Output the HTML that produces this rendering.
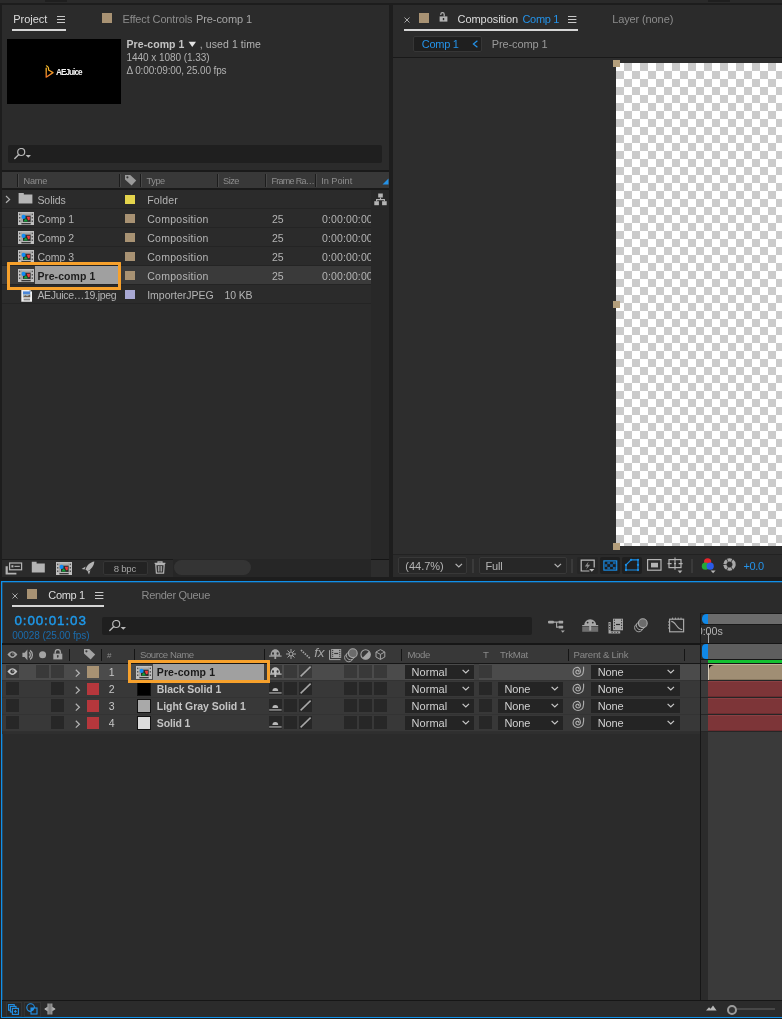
<!DOCTYPE html>
<html><head><meta charset="utf-8"><title>After Effects</title>
<style>
html,body{margin:0;padding:0;}
body{width:782px;height:1019px;overflow:hidden;background:#1d1d1d;font-family:"Liberation Sans", sans-serif;position:relative;}
#app{position:absolute;left:0;top:0;width:782px;height:1019px;overflow:hidden;will-change:transform;}
#app div,#app span,#app svg{position:absolute;display:block;}
.t{white-space:nowrap;}
</style></head><body><div id="app">
<div style="left:0px;top:0px;width:782px;height:3px;background:#2a2a2a;"></div>
<div style="left:45px;top:0px;width:22px;height:2px;background:#1f1f1f;"></div>
<div style="left:708px;top:0px;width:22px;height:2px;background:#1f1f1f;"></div>
<div style="left:2px;top:5px;width:387px;height:572px;background:#2b2b2b;"></div>
<div style="left:393px;top:5px;width:389px;height:572px;background:#2b2b2b;"></div>
<span class="t" style="left:13.3px;top:14px;font-size:11px;line-height:11px;color:#dcdcdc;letter-spacing:-0.036px;">Project</span>
<svg style="left:57px;top:15px;" width="9" height="9" viewBox="0 0 9 9"><path d="M0 1.5h8M0 4.5h8M0 7.5h8" stroke="#c8c8c8" stroke-width="1" fill="none"/></svg>
<div style="left:12px;top:29px;width:54px;height:2px;background:#d6d6d6;"></div>
<div style="left:102px;top:13px;width:10px;height:10px;background:#a89273;"></div>
<span class="t" style="left:122.5px;top:14px;font-size:11px;line-height:11px;color:#8c8c8c;letter-spacing:-0.130px;">Effect Controls</span>
<span class="t" style="left:196px;top:14px;font-size:11px;line-height:11px;color:#a6a6a6;letter-spacing:-0.086px;">Pre-comp 1</span>
<div style="left:7px;top:39px;width:114px;height:65px;background:#000;"></div>
<svg style="left:44px;top:64.7px;" width="11" height="14" viewBox="0 0 11 14"><defs><linearGradient id="lg" x1="0" y1="0" x2="0" y2="1"><stop offset="0" stop-color="#f7b92b"/><stop offset="1" stop-color="#f0772a"/></linearGradient></defs><path d="M2.2 3.2V12.2L9 7.6L4.6 5" stroke="url(#lg)" stroke-width="1.3" fill="none" stroke-linejoin="round" stroke-linecap="round"/><path d="M2.4 0.8C4 1.4 4.8 2.6 4.6 4.6" stroke="#f7b92b" stroke-width="1.1" fill="none" stroke-linecap="round"/></svg>
<span class="t" style="left:56px;top:69px;font-size:8.2px;line-height:8.2px;color:#f4f4f4;font-weight:700;letter-spacing:-0.959px;">AEJuice</span>
<span class="t" style="left:126.5px;top:39px;font-size:10.5px;line-height:10.5px;color:#c4c4c4;font-weight:700;letter-spacing:0.081px;">Pre-comp 1</span>
<svg style="left:188px;top:41px;" width="9" height="7" viewBox="0 0 9 7"><path d="M0.6 0.8h7.4L4.3 6z" fill="#e4e4e4"/></svg>
<span class="t" style="left:199.8px;top:39px;font-size:10.5px;line-height:10.5px;color:#b2b2b2;letter-spacing:0.083px;">, used 1 time</span>
<span class="t" style="left:126.5px;top:53px;font-size:10px;line-height:10px;color:#b2b2b2;letter-spacing:-0.053px;">1440 x 1080 (1.33)</span>
<span class="t" style="left:126.5px;top:66px;font-size:10px;line-height:10px;color:#b2b2b2;letter-spacing:-0.125px;">Δ 0:00:09:00, 25.00 fps</span>
<div style="left:8px;top:145px;width:374px;height:18px;background:#1f1f1f;border-radius:2px;"></div>
<svg style="left:14px;top:148px;" width="18" height="12" viewBox="0 0 18 12"><circle cx="7.2" cy="4" r="3.5" stroke="#b8b8b8" stroke-width="1.2" fill="none"/><path d="M4.8 6.6L0.8 10.6" stroke="#b8b8b8" stroke-width="1.4" stroke-linecap="round"/><path d="M11.6 7h5.4l-2.7 2.8z" fill="#b8b8b8"/></svg>
<div style="left:2px;top:170px;width:387px;height:2px;background:#1a1a1a;"></div>
<div style="left:2px;top:172px;width:387px;height:16px;background:#383838;"></div>
<div style="left:2px;top:188px;width:387px;height:2px;background:#1a1a1a;"></div>
<div style="left:17px;top:174px;width:1px;height:13px;background:#1c1c1c;"></div>
<div style="left:18px;top:174px;width:1px;height:13px;background:#484848;"></div>
<div style="left:119px;top:174px;width:1px;height:13px;background:#1c1c1c;"></div>
<div style="left:120px;top:174px;width:1px;height:13px;background:#484848;"></div>
<div style="left:140px;top:174px;width:1px;height:13px;background:#1c1c1c;"></div>
<div style="left:141px;top:174px;width:1px;height:13px;background:#484848;"></div>
<div style="left:217px;top:174px;width:1px;height:13px;background:#1c1c1c;"></div>
<div style="left:218px;top:174px;width:1px;height:13px;background:#484848;"></div>
<div style="left:265px;top:174px;width:1px;height:13px;background:#1c1c1c;"></div>
<div style="left:266px;top:174px;width:1px;height:13px;background:#484848;"></div>
<div style="left:315px;top:174px;width:1px;height:13px;background:#1c1c1c;"></div>
<div style="left:316px;top:174px;width:1px;height:13px;background:#484848;"></div>
<span class="t" style="left:23.6px;top:177px;font-size:9.2px;line-height:9.2px;color:#8e8e8e;letter-spacing:-0.279px;">Name</span>
<span class="t" style="left:146.5px;top:177px;font-size:9.2px;line-height:9.2px;color:#8e8e8e;letter-spacing:-0.405px;">Type</span>
<span class="t" style="left:223.1px;top:177px;font-size:9.2px;line-height:9.2px;color:#8e8e8e;letter-spacing:-0.519px;">Size</span>
<span class="t" style="left:271.5px;top:177px;font-size:9px;line-height:9px;color:#8e8e8e;letter-spacing:-0.724px;">Frame Ra…</span>
<span class="t" style="left:321.2px;top:177px;font-size:9.2px;line-height:9.2px;color:#8e8e8e;letter-spacing:-0.020px;">In Point</span>
<svg style="left:124px;top:173.6px;" width="14" height="13" viewBox="0 0 14 13"><path d="M1 1h5.2l6 5.6-4.6 4.8-6.6-6z" fill="#9a9a9a"/><circle cx="3.4" cy="3.3" r="1.1" fill="#383838"/></svg>
<svg style="left:382px;top:178px;" width="7" height="7" viewBox="0 0 7 7"><path d="M6.5 0.5v6h-6z" fill="#2492e8"/></svg>
<div style="left:2px;top:190px;width:369px;height:368px;background:#2b2b2b;"></div>
<div style="left:371px;top:190px;width:18px;height:369px;background:#282828;"></div>
<div style="left:2px;top:266px;width:369px;height:19px;background:#3a3a3a;"></div>
<div style="left:2px;top:208px;width:369px;height:1px;background:#242424;"></div>
<div style="left:2px;top:227px;width:369px;height:1px;background:#242424;"></div>
<div style="left:2px;top:246px;width:369px;height:1px;background:#242424;"></div>
<div style="left:2px;top:265px;width:369px;height:1px;background:#242424;"></div>
<div style="left:2px;top:284px;width:369px;height:1px;background:#242424;"></div>
<div style="left:2px;top:303px;width:369px;height:1px;background:#242424;"></div>
<svg style="left:5px;top:195px;" width="6" height="9" viewBox="0 0 6 9"><path d="M1 1l3.6 3.4L1 7.8" stroke="#b0b0b0" stroke-width="1.2" fill="none"/></svg>
<svg style="left:18px;top:192px;" width="16" height="12" viewBox="0 0 16 12"><path d="M0.6 1h5.2v1.6h8.6v9H0.6z" fill="#b6b6b6"/></svg>
<span class="t" style="left:37.4px;top:195px;font-size:10.5px;line-height:10.5px;color:#b4b4b4;letter-spacing:-0.052px;">Solids</span>
<div style="left:125px;top:195px;width:10px;height:9px;background:#e4d44c;"></div>
<span class="t" style="left:147.2px;top:195px;font-size:10.5px;line-height:10.5px;color:#b4b4b4;letter-spacing:0.172px;">Folder</span>
<svg style="left:374px;top:193px;" width="13" height="13" viewBox="0 0 13 13"><g fill="#b4b4b4"><rect x="4.2" y="0.5" width="4.6" height="4"/><rect x="0.3" y="8.2" width="4.6" height="4"/><rect x="8.1" y="8.2" width="4.6" height="4"/></g><path d="M6.5 4.5v2.2M2.6 8.2V6.6h7.8v1.6" stroke="#b4b4b4" stroke-width="1.1" fill="none"/></svg>
<svg style="left:18px;top:212px;" width="16" height="13" viewBox="0 0 16 13"><rect x="0" y="0" width="16" height="13" fill="#c0c0c0"/><rect x="3.5" y="1.5" width="9" height="8.8" fill="#a6a6a6"/><g fill="#3c3c3c"><rect x="1.2" y="1.6" width="1.1" height="1.6"/><rect x="1.2" y="5" width="1.1" height="1.6"/><rect x="1.2" y="8.4" width="1.1" height="1.6"/><rect x="13.7" y="1.6" width="1.1" height="1.6"/><rect x="13.7" y="5" width="1.1" height="1.6"/><rect x="13.7" y="8.4" width="1.1" height="1.6"/></g><rect x="2.9" y="0.8" width="0.5" height="10" fill="#8e8e8e"/><rect x="12.6" y="0.8" width="0.5" height="10" fill="#8e8e8e"/><rect x="5" y="3.7" width="7.6" height="6.2" fill="#2c2c2c"/><rect x="3.4" y="11" width="9.3" height="0.9" fill="#2c2c2c"/><rect x="3.4" y="11.9" width="9.3" height="1.1" fill="#2b2b2b" opacity="0.35"/><path d="M8.7 4.7h3.4l-0.5 3.4-1.5 0.2z" fill="#f23a3c"/><path d="M7.7 6.3l2.2 3.1H5.4z" fill="#10a238"/><circle cx="5.6" cy="4.9" r="2.05" fill="#118cf4"/></svg>
<span class="t" style="left:37.4px;top:214px;font-size:10.5px;line-height:10.5px;color:#b4b4b4;letter-spacing:-0.028px;">Comp 1</span>
<div style="left:125px;top:214px;width:10px;height:9px;background:#a89273;"></div>
<span class="t" style="left:147.2px;top:214px;font-size:10.5px;line-height:10.5px;color:#b4b4b4;letter-spacing:0.284px;">Composition</span>
<span class="t" style="left:272px;top:214px;font-size:10.5px;line-height:10.5px;color:#b4b4b4;letter-spacing:-0.094px;">25</span>
<div style="left:322px;top:209px;width:49px;height:18px;overflow:hidden;"><span class="t" style="left:0;top:4.91px;font-size:10.5px;line-height:10.5px;color:#b4b4b4;letter-spacing:0.12px;">0:00:00:00</span></div>
<svg style="left:18px;top:231px;" width="16" height="13" viewBox="0 0 16 13"><rect x="0" y="0" width="16" height="13" fill="#c0c0c0"/><rect x="3.5" y="1.5" width="9" height="8.8" fill="#a6a6a6"/><g fill="#3c3c3c"><rect x="1.2" y="1.6" width="1.1" height="1.6"/><rect x="1.2" y="5" width="1.1" height="1.6"/><rect x="1.2" y="8.4" width="1.1" height="1.6"/><rect x="13.7" y="1.6" width="1.1" height="1.6"/><rect x="13.7" y="5" width="1.1" height="1.6"/><rect x="13.7" y="8.4" width="1.1" height="1.6"/></g><rect x="2.9" y="0.8" width="0.5" height="10" fill="#8e8e8e"/><rect x="12.6" y="0.8" width="0.5" height="10" fill="#8e8e8e"/><rect x="5" y="3.7" width="7.6" height="6.2" fill="#2c2c2c"/><rect x="3.4" y="11" width="9.3" height="0.9" fill="#2c2c2c"/><rect x="3.4" y="11.9" width="9.3" height="1.1" fill="#2b2b2b" opacity="0.35"/><path d="M8.7 4.7h3.4l-0.5 3.4-1.5 0.2z" fill="#f23a3c"/><path d="M7.7 6.3l2.2 3.1H5.4z" fill="#10a238"/><circle cx="5.6" cy="4.9" r="2.05" fill="#118cf4"/></svg>
<span class="t" style="left:37.4px;top:233px;font-size:10.5px;line-height:10.5px;color:#b4b4b4;letter-spacing:-0.028px;">Comp 2</span>
<div style="left:125px;top:233px;width:10px;height:9px;background:#a89273;"></div>
<span class="t" style="left:147.2px;top:233px;font-size:10.5px;line-height:10.5px;color:#b4b4b4;letter-spacing:0.284px;">Composition</span>
<span class="t" style="left:272px;top:233px;font-size:10.5px;line-height:10.5px;color:#b4b4b4;letter-spacing:-0.094px;">25</span>
<div style="left:322px;top:228px;width:49px;height:18px;overflow:hidden;"><span class="t" style="left:0;top:4.91px;font-size:10.5px;line-height:10.5px;color:#b4b4b4;letter-spacing:0.12px;">0:00:00:00</span></div>
<svg style="left:18px;top:250px;" width="16" height="13" viewBox="0 0 16 13"><rect x="0" y="0" width="16" height="13" fill="#c0c0c0"/><rect x="3.5" y="1.5" width="9" height="8.8" fill="#a6a6a6"/><g fill="#3c3c3c"><rect x="1.2" y="1.6" width="1.1" height="1.6"/><rect x="1.2" y="5" width="1.1" height="1.6"/><rect x="1.2" y="8.4" width="1.1" height="1.6"/><rect x="13.7" y="1.6" width="1.1" height="1.6"/><rect x="13.7" y="5" width="1.1" height="1.6"/><rect x="13.7" y="8.4" width="1.1" height="1.6"/></g><rect x="2.9" y="0.8" width="0.5" height="10" fill="#8e8e8e"/><rect x="12.6" y="0.8" width="0.5" height="10" fill="#8e8e8e"/><rect x="5" y="3.7" width="7.6" height="6.2" fill="#2c2c2c"/><rect x="3.4" y="11" width="9.3" height="0.9" fill="#2c2c2c"/><rect x="3.4" y="11.9" width="9.3" height="1.1" fill="#2b2b2b" opacity="0.35"/><path d="M8.7 4.7h3.4l-0.5 3.4-1.5 0.2z" fill="#f23a3c"/><path d="M7.7 6.3l2.2 3.1H5.4z" fill="#10a238"/><circle cx="5.6" cy="4.9" r="2.05" fill="#118cf4"/></svg>
<span class="t" style="left:37.4px;top:252px;font-size:10.5px;line-height:10.5px;color:#b4b4b4;letter-spacing:-0.028px;">Comp 3</span>
<div style="left:125px;top:252px;width:10px;height:9px;background:#a89273;"></div>
<span class="t" style="left:147.2px;top:252px;font-size:10.5px;line-height:10.5px;color:#b4b4b4;letter-spacing:0.284px;">Composition</span>
<span class="t" style="left:272px;top:252px;font-size:10.5px;line-height:10.5px;color:#b4b4b4;letter-spacing:-0.094px;">25</span>
<div style="left:322px;top:247px;width:49px;height:18px;overflow:hidden;"><span class="t" style="left:0;top:4.91px;font-size:10.5px;line-height:10.5px;color:#b4b4b4;letter-spacing:0.12px;">0:00:00:00</span></div>
<div style="left:35px;top:266px;width:83px;height:18px;background:#a0a0a0;"></div>
<svg style="left:18px;top:269px;" width="16" height="13" viewBox="0 0 16 13"><rect x="0" y="0" width="16" height="13" fill="#c0c0c0"/><rect x="3.5" y="1.5" width="9" height="8.8" fill="#a6a6a6"/><g fill="#3c3c3c"><rect x="1.2" y="1.6" width="1.1" height="1.6"/><rect x="1.2" y="5" width="1.1" height="1.6"/><rect x="1.2" y="8.4" width="1.1" height="1.6"/><rect x="13.7" y="1.6" width="1.1" height="1.6"/><rect x="13.7" y="5" width="1.1" height="1.6"/><rect x="13.7" y="8.4" width="1.1" height="1.6"/></g><rect x="2.9" y="0.8" width="0.5" height="10" fill="#8e8e8e"/><rect x="12.6" y="0.8" width="0.5" height="10" fill="#8e8e8e"/><rect x="5" y="3.7" width="7.6" height="6.2" fill="#2c2c2c"/><rect x="3.4" y="11" width="9.3" height="0.9" fill="#2c2c2c"/><rect x="3.4" y="11.9" width="9.3" height="1.1" fill="#3a3a3a" opacity="0.35"/><path d="M8.7 4.7h3.4l-0.5 3.4-1.5 0.2z" fill="#f23a3c"/><path d="M7.7 6.3l2.2 3.1H5.4z" fill="#10a238"/><circle cx="5.6" cy="4.9" r="2.05" fill="#118cf4"/></svg>
<span class="t" style="left:37.4px;top:271px;font-size:10.5px;line-height:10.5px;color:#1c1c1c;font-weight:700;letter-spacing:0.081px;">Pre-comp 1</span>
<div style="left:125px;top:271px;width:10px;height:9px;background:#a89273;"></div>
<span class="t" style="left:147.2px;top:271px;font-size:10.5px;line-height:10.5px;color:#b4b4b4;letter-spacing:0.284px;">Composition</span>
<span class="t" style="left:272px;top:271px;font-size:10.5px;line-height:10.5px;color:#b4b4b4;letter-spacing:-0.094px;">25</span>
<div style="left:322px;top:266px;width:49px;height:18px;overflow:hidden;"><span class="t" style="left:0;top:4.91px;font-size:10.5px;line-height:10.5px;color:#b4b4b4;letter-spacing:0.12px;">0:00:00:00</span></div>
<svg style="left:20.6px;top:288.6px;" width="11.4" height="13" viewBox="0 0 11.4 13"><path d="M0.3 0.3h8l2.8 2.8v9.6H0.3z" fill="#f0f0f0"/><path d="M8.3 0.3v2.8h2.8z" fill="#b8b8b8"/><rect x="2" y="2.4" width="7.2" height="3" fill="#4a86d8"/><rect x="2" y="5" width="7.2" height="3.2" fill="#9fb4c4"/><path d="M2 8.2l2.2-2 2 1 3-1.6v2.6z" fill="#6a5a48"/><rect x="2.6" y="9.6" width="6.4" height="1.8" fill="#8a8a8a"/></svg>
<span class="t" style="left:37.4px;top:290px;font-size:10.5px;line-height:10.5px;color:#b4b4b4;letter-spacing:-0.298px;">AEJuice…19.jpeg</span>
<div style="left:125px;top:290px;width:10px;height:9px;background:#a9a9d4;"></div>
<span class="t" style="left:147.2px;top:290px;font-size:10.5px;line-height:10.5px;color:#b4b4b4;letter-spacing:-0.003px;">ImporterJPEG</span>
<span class="t" style="left:224.5px;top:290px;font-size:10.5px;line-height:10.5px;color:#b4b4b4;letter-spacing:-0.122px;">10 KB</span>
<div style="left:7px;top:262px;width:108px;height:22px;border:3px solid #f7a12c;border-radius:0.5px;"></div>
<div style="left:2px;top:559px;width:387px;height:18px;background:#2b2b2b;"></div>
<div style="left:2px;top:559px;width:171px;height:1px;background:#1a1a1a;"></div>
<div style="left:173px;top:559px;width:198px;height:18px;background:#262626;"></div>
<div style="left:371px;top:559px;width:18px;height:1px;background:#151515;"></div>
<div style="left:371px;top:560px;width:18px;height:17px;background:#2d2d2d;"></div>
<svg style="left:5px;top:562px;" width="18" height="13" viewBox="0 0 18 13"><path d="M0.6 4.2h2.2v6.6h8.6v1.6H0.6z" fill="#b4b4b4"/><rect x="4.6" y="1" width="12" height="6.8" fill="none" stroke="#b4b4b4" stroke-width="1.2"/><rect x="6.4" y="3.2" width="2" height="2.2" fill="#b4b4b4"/><rect x="9.4" y="3.8" width="5.4" height="1.1" fill="#b4b4b4"/></svg>
<svg style="left:31px;top:561px;" width="15" height="12" viewBox="0 0 15 12"><path d="M0.8 0.8h4.8v1.6h8.2v9H0.8z" fill="#b4b4b4"/></svg>
<svg style="left:55px;top:562px;" width="18" height="13" viewBox="0 0 16 13"><rect x="0" y="0" width="16" height="13" fill="#c0c0c0"/><rect x="3.5" y="1.5" width="9" height="8.8" fill="#a6a6a6"/><g fill="#3c3c3c"><rect x="1.2" y="1.6" width="1.1" height="1.6"/><rect x="1.2" y="5" width="1.1" height="1.6"/><rect x="1.2" y="8.4" width="1.1" height="1.6"/><rect x="13.7" y="1.6" width="1.1" height="1.6"/><rect x="13.7" y="5" width="1.1" height="1.6"/><rect x="13.7" y="8.4" width="1.1" height="1.6"/></g><rect x="2.9" y="0.8" width="0.5" height="10" fill="#8e8e8e"/><rect x="12.6" y="0.8" width="0.5" height="10" fill="#8e8e8e"/><rect x="5" y="3.7" width="7.6" height="6.2" fill="#2c2c2c"/><rect x="3.4" y="11" width="9.3" height="0.9" fill="#2c2c2c"/><rect x="3.4" y="11.9" width="9.3" height="1.1" fill="#2b2b2b" opacity="0.35"/><path d="M8.7 4.7h3.4l-0.5 3.4-1.5 0.2z" fill="#f23a3c"/><path d="M7.7 6.3l2.2 3.1H5.4z" fill="#10a238"/><circle cx="5.6" cy="4.9" r="2.05" fill="#118cf4"/></svg>
<svg style="left:81px;top:561px;" width="14" height="14" viewBox="0 0 14 14"><path d="M13.4 0.4C9 1 6 4 4.4 8.6l2.4 1.6C10.4 8 12.8 5 13.4 0.4z" fill="#b4b4b4"/><path d="M4.6 5.4L0.6 8l3 0.4z" fill="#b4b4b4"/><path d="M9.4 9.2L8 13.4l-1.4-2.8z" fill="#b4b4b4"/></svg>
<div style="left:103px;top:561px;width:45px;height:14px;background:#232323;border:1px solid #353535;box-sizing:border-box;border-radius:2px;"></div>
<span class="t" style="left:113.8px;top:564px;font-size:9.6px;line-height:9.6px;color:#a4a4a4;letter-spacing:-0.257px;">8 bpc</span>
<svg style="left:154px;top:561px;" width="12" height="13" viewBox="0 0 12 13"><path d="M0.6 2.4h10.8M4 2.2V0.8h4v1.4" stroke="#b4b4b4" stroke-width="1.2" fill="none"/><path d="M1.8 3.6h8.4l-0.6 8.6H2.4z" fill="none" stroke="#b4b4b4" stroke-width="1.2"/><path d="M4.4 5v5.6M6 5v5.6M7.6 5v5.6" stroke="#b4b4b4" stroke-width="0.9"/></svg>
<div style="left:174px;top:560px;width:77px;height:15px;background:#343434;border-radius:7.5px;"></div>
<svg style="left:404px;top:17px;" width="6" height="6" viewBox="0 0 6 6"><path d="M0.5 0.5l5 5M5.5 0.5l-5 5" stroke="#a8a8a8" stroke-width="1"/></svg>
<div style="left:419px;top:13px;width:10px;height:10px;background:#a89273;"></div>
<svg style="left:439px;top:12px;" width="9" height="10" viewBox="0 0 9 10"><rect x="0.6" y="4.4" width="7.8" height="5.2" fill="#b4b4b4"/><path d="M5.2 4.4V2.4a1.7 1.7 0 0 0-3.4 0v0.6" stroke="#b4b4b4" stroke-width="1.2" fill="none"/><rect x="3.8" y="6" width="1.4" height="2.2" fill="#2b2b2b"/></svg>
<span class="t" style="left:457.5px;top:14px;font-size:11px;line-height:11px;color:#dcdcdc;letter-spacing:-0.049px;">Composition</span>
<span class="t" style="left:522.5px;top:14px;font-size:11px;line-height:11px;color:#2492e8;letter-spacing:-0.339px;">Comp 1</span>
<svg style="left:568px;top:15px;" width="9" height="9" viewBox="0 0 9 9"><path d="M0 1.5h8.4M0 4.5h8.4M0 7.5h8.4" stroke="#c8c8c8" stroke-width="1" fill="none"/></svg>
<div style="left:404px;top:29px;width:174px;height:2px;background:#d6d6d6;"></div>
<span class="t" style="left:612.2px;top:14px;font-size:11px;line-height:11px;color:#8c8c8c;letter-spacing:-0.115px;">Layer (none)</span>
<div style="left:413px;top:36px;width:69px;height:16px;background:#1f1f1f;border:1px solid #363636;box-sizing:border-box;border-radius:2px;"></div>
<span class="t" style="left:421.7px;top:39px;font-size:11px;line-height:11px;color:#2492e8;letter-spacing:-0.255px;">Comp 1</span>
<svg style="left:472px;top:40px;" width="7" height="8" viewBox="0 0 7 8"><path d="M5.4 0.8L1.4 4l4 3.2" stroke="#2492e8" stroke-width="1.2" fill="none"/></svg>
<span class="t" style="left:491.8px;top:39px;font-size:11px;line-height:11px;color:#9a9a9a;letter-spacing:-0.116px;">Pre-comp 1</span>
<div style="left:393px;top:57px;width:389px;height:1px;background:#191919;"></div>
<div style="left:393px;top:58px;width:389px;height:496px;background:#2d2d2d;"></div>
<div style="left:616px;top:63px;width:166px;height:483px;background-color:#fff;background-image:conic-gradient(#cbcbcb 25%,#fff 0 50%,#cbcbcb 0 75%,#fff 0);background-size:16px 16px;background-position:0 0;"></div>
<div style="left:613px;top:60px;width:7px;height:7px;background:#b39e7b;"></div>
<div style="left:613px;top:301px;width:7px;height:7px;background:#b39e7b;"></div>
<div style="left:613px;top:543px;width:7px;height:7px;background:#b39e7b;"></div>
<div style="left:393px;top:554px;width:389px;height:1px;background:#222;"></div>
<div style="left:393px;top:555px;width:389px;height:22px;background:#2b2b2b;"></div>
<div style="left:398px;top:557px;width:69px;height:17px;background:#272727;border:1px solid #383838;box-sizing:border-box;border-radius:2px;"></div>
<span class="t" style="left:405.3px;top:561px;font-size:11px;line-height:11px;color:#b4b4b4;letter-spacing:-0.019px;">(44.7%)</span>
<svg style="left:455px;top:563px;" width="8" height="5" viewBox="0 0 8 5"><path d="M0.6 0.8L3.8 4l3.2-3.2" stroke="#b4b4b4" stroke-width="1.2" fill="none"/></svg>
<div style="left:472px;top:559px;width:2px;height:14px;background:#3a3a3a;"></div>
<div style="left:479px;top:557px;width:88px;height:17px;background:#272727;border:1px solid #383838;box-sizing:border-box;border-radius:2px;"></div>
<span class="t" style="left:485.4px;top:561px;font-size:11px;line-height:11px;color:#b4b4b4;letter-spacing:-0.159px;">Full</span>
<svg style="left:553.5px;top:563px;" width="8" height="5" viewBox="0 0 8 5"><path d="M0.6 0.8L3.8 4l3.2-3.2" stroke="#b4b4b4" stroke-width="1.2" fill="none"/></svg>
<div style="left:571px;top:559px;width:2px;height:14px;background:#3a3a3a;"></div>
<div style="left:577px;top:557px;width:21px;height:17px;background:#262626;border-radius:2px;"></div>
<svg style="left:580px;top:558.8px;" width="16" height="14" viewBox="0 0 16 14"><path d="M9.4 12H1.2V1.2h13v7.4" fill="none" stroke="#bcbcbc" stroke-width="1.2"/><path d="M8.6 2.6L4.8 7.4h2.6L6 10.8l4.2-5H7.6z" fill="#8e8e8e"/><path d="M9.2 10.1h5.2l-2.6 2.7z" fill="#bcbcbc"/></svg>
<div style="left:600px;top:557px;width:20px;height:17px;background:#1f1f1f;border-radius:2px;"></div>
<svg style="left:603px;top:559.8px;" width="15" height="11" viewBox="0 0 15 11"><rect x="0.9" y="0.9" width="12.8" height="9.2" fill="#1b1b1b" stroke="#1a8fe8" stroke-width="1.2"/><g fill="#17609e"><rect x="4.3" y="1.5" width="2.8" height="2.7"/><rect x="9.9" y="1.5" width="2.8" height="2.7"/><rect x="1.5" y="4.2" width="2.8" height="2.7"/><rect x="7.1" y="4.2" width="2.8" height="2.7"/><rect x="12.7" y="4.2" width="0.5" height="2.7"/><rect x="4.3" y="6.9" width="2.8" height="2.6"/><rect x="9.9" y="6.9" width="2.8" height="2.6"/></g></svg>
<div style="left:622px;top:557px;width:20px;height:17px;background:#1f1f1f;border-radius:2px;"></div>
<svg style="left:624px;top:558px;" width="16" height="14" viewBox="0 0 16 14"><path d="M2 6.9L7.1 1.8h6.9v10.2H2z" fill="none" stroke="#1a8fe8" stroke-width="1.2"/><g fill="#1a8fe8"><circle cx="2" cy="6.9" r="1.15"/><circle cx="7.1" cy="1.8" r="1.15"/><circle cx="14" cy="1.8" r="1.15"/><circle cx="14" cy="6.9" r="1.15"/><circle cx="14" cy="12" r="1.15"/><circle cx="2" cy="12" r="1.15"/></g></svg>
<svg style="left:647px;top:559px;" width="15" height="12" viewBox="0 0 15 12"><rect x="0.6" y="0.6" width="13.4" height="10.6" fill="none" stroke="#b4b4b4" stroke-width="1.2"/><rect x="4" y="3.8" width="7" height="4.6" fill="#b4b4b4"/></svg>
<svg style="left:667px;top:557px;" width="17" height="17" viewBox="0 0 17 17"><rect x="2" y="2.6" width="12" height="8" fill="none" stroke="#b4b4b4" stroke-width="1.2"/><path d="M8 0.4v12.4M0.6 6.6h4M11.6 6.6h4M7 6.6h2" stroke="#b4b4b4" stroke-width="1.1"/><path d="M10.6 13.4h4.8l-2.4 2.8z" fill="#b4b4b4"/></svg>
<div style="left:691px;top:559px;width:2px;height:14px;background:#3a3a3a;"></div>
<svg style="left:701px;top:557px;" width="17" height="17" viewBox="0 0 17 17"><circle cx="6.6" cy="4.8" r="3.6" fill="#e8242c"/><circle cx="4.4" cy="9.2" r="3.6" fill="#22a838"/><circle cx="9.2" cy="9.2" r="3.6" fill="#2a5be8"/><path d="M9.6 13.4h5l-2.5 2.8z" fill="#b4b4b4"/></svg>
<svg style="left:723px;top:558px;" width="13" height="13" viewBox="0 0 13 13"><circle cx="6.5" cy="6.5" r="4.6" fill="none" stroke="#a8a8a8" stroke-width="3.2" stroke-dasharray="4.1 0.7"/></svg>
<span class="t" style="left:743.5px;top:561px;font-size:11px;line-height:11px;color:#2492e8;letter-spacing:-0.355px;">+0.0</span>
<div style="left:0px;top:581px;width:2px;height:438px;background:#2a2422;"></div>
<div style="left:1px;top:581px;width:781px;height:437px;background:#2b2b2b;border-top:1px solid #1090ea;border-left:1px solid #1090ea;border-bottom:1px solid #1090ea;box-sizing:border-box;"></div>
<div style="left:2px;top:582px;width:780px;height:1px;background:rgba(16,144,234,0.3);"></div>
<div style="left:2px;top:582px;width:1px;height:435px;background:rgba(16,144,234,0.3);"></div>
<div style="left:0px;top:1018px;width:782px;height:1px;background:#1d1d1d;"></div>
<svg style="left:12px;top:593px;" width="6" height="6" viewBox="0 0 6 6"><path d="M0.5 0.5l5 5M5.5 0.5l-5 5" stroke="#a8a8a8" stroke-width="1"/></svg>
<div style="left:27px;top:589px;width:10px;height:10px;background:#a89273;"></div>
<span class="t" style="left:48.3px;top:590px;font-size:11px;line-height:11px;color:#dcdcdc;letter-spacing:-0.322px;">Comp 1</span>
<svg style="left:95px;top:591px;" width="9" height="9" viewBox="0 0 9 9"><path d="M0 1.5h8.4M0 4.5h8.4M0 7.5h8.4" stroke="#c8c8c8" stroke-width="1" fill="none"/></svg>
<div style="left:12px;top:605px;width:92px;height:2px;background:#d6d6d6;"></div>
<span class="t" style="left:141.5px;top:590px;font-size:11px;line-height:11px;color:#8c8c8c;letter-spacing:-0.306px;">Render Queue</span>
<span class="t" style="left:14.4px;top:614px;font-size:13.4px;line-height:13.4px;color:#1e9aec;letter-spacing:0.910px;-webkit-text-stroke:0.4px #1e9aec;">0:00:01:03</span>
<span class="t" style="left:12.2px;top:631px;font-size:10px;line-height:10px;color:#1b6cac;letter-spacing:-0.064px;">00028 (25.00 fps)</span>
<div style="left:102px;top:617px;width:430px;height:18px;background:#1f1f1f;border-radius:2px;"></div>
<svg style="left:109px;top:620px;" width="18" height="12" viewBox="0 0 18 12"><circle cx="7.2" cy="4" r="3.5" stroke="#b8b8b8" stroke-width="1.2" fill="none"/><path d="M4.8 6.6L0.8 10.6" stroke="#b8b8b8" stroke-width="1.4" stroke-linecap="round"/><path d="M11.6 7h5.4l-2.7 2.8z" fill="#b8b8b8"/></svg>
<svg style="left:548px;top:620px;" width="18" height="14" viewBox="0 0 18 14"><g fill="#a8a8a8"><rect x="0" y="0.8" width="6" height="2.6" rx="1"/><rect x="10.4" y="0.8" width="4.8" height="2.6" rx="0.6"/><rect x="10.4" y="5.8" width="4.8" height="2.6" rx="0.6"/></g><path d="M6 2.1h4.4M8.6 2.1v5h1.8" stroke="#a8a8a8" stroke-width="1.1" fill="none"/><path d="M12.8 10.4h4l-2 2.3z" fill="#a8a8a8"/></svg>
<svg style="left:582px;top:619px;" width="17" height="13" viewBox="0 0 17 13"><rect x="0.2" y="8" width="16" height="4.8" fill="#6e6e6e"/><path d="M2.2 6.2a6 6 0 0 1 12 0z" fill="#a8a8a8"/><rect x="0.2" y="6" width="16" height="1.3" fill="#a8a8a8"/><rect x="7.2" y="3.6" width="2" height="8" fill="#a8a8a8"/><circle cx="5.6" cy="3.6" r="0.9" fill="#2b2b2b"/><circle cx="10.8" cy="3.6" r="0.9" fill="#2b2b2b"/></svg>
<svg style="left:608px;top:618px;" width="16" height="16" viewBox="0 0 16 16"><rect x="5" y="0.7" width="10" height="11.6" fill="#a8a8a8"/><g fill="#2b2b2b"><rect x="5.9" y="1.60" width="1.1" height="1.1"/><rect x="13" y="1.60" width="1.1" height="1.1"/><rect x="5.9" y="4.20" width="1.1" height="1.1"/><rect x="13" y="4.20" width="1.1" height="1.1"/><rect x="5.9" y="6.80" width="1.1" height="1.1"/><rect x="13" y="6.80" width="1.1" height="1.1"/><rect x="5.9" y="9.40" width="1.1" height="1.1"/><rect x="13" y="9.40" width="1.1" height="1.1"/><rect x="8.0" y="5.90" width="4" height="1.2"/></g><path d="M1.6 4v10.4h10.6" stroke="#a8a8a8" stroke-width="2.2" fill="none"/><g fill="#2b2b2b"><rect x="1.1" y="5.4" width="1" height="1"/><rect x="1.1" y="8" width="1" height="1"/><rect x="1.1" y="10.6" width="1" height="1"/><rect x="3.6" y="13.9" width="1" height="1"/><rect x="6.4" y="13.9" width="1" height="1"/><rect x="9.2" y="13.9" width="1" height="1"/></g></svg>
<svg style="left:634px;top:618px;" width="15" height="15" viewBox="0 0 15 15"><circle cx="4.8" cy="9.6" r="4.2" fill="#2b2b2b" stroke="#a8a8a8" stroke-width="1"/><circle cx="6.6" cy="7.6" r="4.2" fill="#2b2b2b" stroke="#a8a8a8" stroke-width="1"/><circle cx="8.8" cy="5.2" r="4.4" fill="#6c6c6c" stroke="#a8a8a8" stroke-width="1.1"/></svg>
<svg style="left:668px;top:617px;" width="17" height="16" viewBox="0 0 17 16"><rect x="1.6" y="2.2" width="14" height="12.6" fill="none" stroke="#a8a8a8" stroke-width="1.2"/><path d="M3.2 4.4C8 4.4 8.6 12.6 14.2 12.6" stroke="#a8a8a8" stroke-width="1.2" fill="none"/><path d="M4.6 0.6v1.6M7.4 0.6v1.6M10.2 0.6v1.6M13 0.6v1.6M0 5h1.6M0 8h1.6M0 11h1.6" stroke="#a8a8a8" stroke-width="1"/></svg>
<div style="left:2px;top:643px;width:698px;height:2px;background:#161616;"></div>
<div style="left:2px;top:645px;width:698px;height:18px;background:#383838;"></div>
<div style="left:2px;top:663px;width:698px;height:1px;background:#161616;"></div>
<div style="left:69px;top:649px;width:1px;height:12px;background:#151515;"></div>
<div style="left:101px;top:649px;width:1px;height:12px;background:#151515;"></div>
<div style="left:134px;top:649px;width:1px;height:12px;background:#151515;"></div>
<div style="left:264px;top:649px;width:1px;height:12px;background:#151515;"></div>
<div style="left:401px;top:649px;width:1px;height:12px;background:#151515;"></div>
<div style="left:567.5px;top:649px;width:1px;height:12px;background:#151515;"></div>
<div style="left:684px;top:649px;width:1px;height:12px;background:#151515;"></div>
<svg style="left:7.3px;top:651px;" width="11" height="7.2" viewBox="0 0 11 7.2"><path d="M0.4 3.6C2.2 1 3.8 0.3 5.4 0.3S8.6 1 10.4 3.6C8.6 6.2 7 6.9 5.4 6.9S2.2 6.2 0.4 3.6z" fill="#a4a4a4"/><circle cx="5.4" cy="3.5" r="2.1" fill="#383838"/><circle cx="6" cy="2.9" r="0.7" fill="#a4a4a4"/></svg>
<svg style="left:21.6px;top:648.6px;" width="13" height="12" viewBox="0 0 13 12"><path d="M0.4 3.8h2.2L5.4 0.6v10.6L2.6 8H0.4z" fill="#a4a4a4"/><path d="M7 3.4a3 3 0 0 1 0 5M8 1.4a5.4 5.4 0 0 1 0 9" stroke="#a4a4a4" stroke-width="1.3" fill="none"/></svg>
<svg style="left:39px;top:651px;" width="8" height="8" viewBox="0 0 8 8"><circle cx="3.6" cy="3.7" r="3.5" fill="#a4a4a4"/></svg>
<svg style="left:52.6px;top:648.6px;" width="10" height="11" viewBox="0 0 10 11"><rect x="0.3" y="4.6" width="9" height="5.8" fill="#a4a4a4"/><path d="M2.2 4.8V3.2a2.6 2.6 0 0 1 5.2 0v1.6" stroke="#a4a4a4" stroke-width="1.4" fill="none"/><circle cx="4.8" cy="7" r="0.9" fill="#383838"/><rect x="4.4" y="7" width="0.8" height="2" fill="#383838"/></svg>
<svg style="left:83px;top:648px;" width="13" height="13" viewBox="0 0 13 13"><path d="M1 1h5.2l6 5.6-4.6 4.8-6.6-6z" fill="#a4a4a4"/><circle cx="3.4" cy="3.3" r="1.1" fill="#383838"/></svg>
<span class="t" style="left:107px;top:652px;font-size:8px;line-height:8px;color:#8a8a8a;">#</span>
<span class="t" style="left:140px;top:650px;font-size:9.6px;line-height:9.6px;color:#8a8a8a;letter-spacing:-0.451px;">Source Name</span>
<svg style="left:269.2px;top:649px;" width="13" height="10" viewBox="0 0 13 10"><path d="M1.5 6.7C1.5 2.6 3.6 0.2 6.3 0.2S11.1 2.6 11.1 6.7z" fill="#a4a4a4"/><rect x="0" y="6.5" width="12.6" height="1.2" fill="#a4a4a4"/><rect x="5.4" y="3.4" width="1.8" height="6.6" fill="#a4a4a4"/><rect x="3" y="3.3" width="2" height="2.4" rx="0.8" fill="#383838"/><rect x="7.6" y="3.3" width="2" height="2.4" rx="0.8" fill="#383838"/></svg>
<svg style="left:285.5px;top:649.3px;" width="10" height="10" viewBox="0 0 10 10"><circle cx="5" cy="5" r="2" fill="none" stroke="#a4a4a4" stroke-width="1.1"/><path d="M5 0v2.4M5 7.6V10M0 5h2.4M7.6 5H10M1.5 1.5l1.7 1.7M6.8 6.8l1.7 1.7M8.5 1.5L6.8 3.2M3.2 6.8L1.5 8.5" stroke="#a4a4a4" stroke-width="1"/></svg>
<svg style="left:300px;top:649px;" width="11" height="10" viewBox="0 0 11 10"><path d="M1 1l9 8.4" stroke="#a4a4a4" stroke-width="1.7" stroke-dasharray="1.5 1.1" fill="none"/></svg>
<span class="t" style="left:314.2px;top:646.2px;font-size:13.5px;line-height:14px;color:#a4a4a4;font-style:italic;letter-spacing:-0.3px;">fx</span>
<svg style="left:329px;top:649px;" width="13" height="12" viewBox="0 0 13 12"><rect x="2.2" y="0" width="10" height="9" fill="#a4a4a4"/><g fill="#383838"><rect x="3.1" y="0.90" width="1.1" height="1.1"/><rect x="10.2" y="0.90" width="1.1" height="1.1"/><rect x="3.1" y="2.85" width="1.1" height="1.1"/><rect x="10.2" y="2.85" width="1.1" height="1.1"/><rect x="3.1" y="4.80" width="1.1" height="1.1"/><rect x="10.2" y="4.80" width="1.1" height="1.1"/><rect x="3.1" y="6.75" width="1.1" height="1.1"/><rect x="10.2" y="6.75" width="1.1" height="1.1"/><rect x="5.2" y="3.90" width="4" height="1.2"/></g><path d="M0.5 1.2v9.4h11" stroke="#a4a4a4" stroke-width="1" fill="none"/></svg>
<svg style="left:343.6px;top:647.6px;" width="15" height="15" viewBox="0 0 15 15"><circle cx="4.8" cy="9.6" r="4.2" fill="#383838" stroke="#a4a4a4" stroke-width="1"/><circle cx="6.6" cy="7.6" r="4.2" fill="#383838" stroke="#a4a4a4" stroke-width="1"/><circle cx="8.8" cy="5.2" r="4.4" fill="#6c6c6c" stroke="#a4a4a4" stroke-width="1.1"/></svg>
<svg style="left:360px;top:649px;" width="12" height="12" viewBox="0 0 12 12"><circle cx="5.6" cy="5.5" r="4.7" fill="none" stroke="#a4a4a4" stroke-width="1.1"/><path d="M9 2.2A4.7 4.7 0 0 1 2.3 8.9z" fill="#a4a4a4"/></svg>
<svg style="left:375px;top:649px;" width="11" height="11" viewBox="0 0 11 11"><path d="M5.4 0.6l4.4 2.4v5L5.4 10.4 1 8V3z" fill="none" stroke="#a4a4a4" stroke-width="1"/><path d="M1 3l4.4 2.4L9.8 3M5.4 5.4v5" stroke="#a4a4a4" stroke-width="1" fill="none"/></svg>
<span class="t" style="left:407.4px;top:650px;font-size:9.6px;line-height:9.6px;color:#8a8a8a;letter-spacing:-0.375px;">Mode</span>
<span class="t" style="left:483px;top:650px;font-size:9.6px;line-height:9.6px;color:#8a8a8a;">T</span>
<span class="t" style="left:500px;top:650px;font-size:9.6px;line-height:9.6px;color:#8a8a8a;letter-spacing:-0.250px;">TrkMat</span>
<span class="t" style="left:573.5px;top:650px;font-size:9.6px;line-height:9.6px;color:#8a8a8a;letter-spacing:-0.216px;">Parent &amp; Link</span>
<div style="left:2px;top:664px;width:698px;height:16px;background:#4b4b4b;"></div>
<div style="left:2px;top:680px;width:698px;height:1px;background:#333333;"></div>
<div style="left:6px;top:665px;width:13px;height:13px;background:#393939;"></div>
<div style="left:36px;top:665px;width:13px;height:13px;background:#393939;"></div>
<svg style="left:7.3px;top:668.2px;" width="11" height="7.2" viewBox="0 0 11 7.2"><path d="M0.4 3.6C2.2 1 3.8 0.3 5.4 0.3S8.6 1 10.4 3.6C8.6 6.2 7 6.9 5.4 6.9S2.2 6.2 0.4 3.6z" fill="#c4c4c4"/><circle cx="5.4" cy="3.5" r="2.1" fill="#393939"/><circle cx="6" cy="2.9" r="0.7" fill="#c4c4c4"/></svg>
<div style="left:51px;top:665px;width:13px;height:13px;background:#393939;"></div>
<svg style="left:75.4px;top:668.6px;" width="6" height="9" viewBox="0 0 6 9"><path d="M0.8 0.8l3.6 3.4L0.8 7.6" stroke="#b4b4b4" stroke-width="1.2" fill="none"/></svg>
<div style="left:87px;top:666px;width:12px;height:12px;background:#a89273;"></div>
<span class="t" style="left:108.8px;top:667px;font-size:10.5px;line-height:10.5px;color:#c8c8c8;">1</span>
<div style="left:153px;top:664px;width:111px;height:16px;background:#a0a0a0;"></div>
<div style="left:264px;top:664px;width:3px;height:16px;background:#3c3c3c;"></div>
<svg style="left:136px;top:666px;" width="16" height="13" viewBox="0 0 16 13"><rect x="0" y="0" width="16" height="13" fill="#c0c0c0"/><rect x="3.5" y="1.5" width="9" height="8.8" fill="#a6a6a6"/><g fill="#3c3c3c"><rect x="1.2" y="1.6" width="1.1" height="1.6"/><rect x="1.2" y="5" width="1.1" height="1.6"/><rect x="1.2" y="8.4" width="1.1" height="1.6"/><rect x="13.7" y="1.6" width="1.1" height="1.6"/><rect x="13.7" y="5" width="1.1" height="1.6"/><rect x="13.7" y="8.4" width="1.1" height="1.6"/></g><rect x="2.9" y="0.8" width="0.5" height="10" fill="#8e8e8e"/><rect x="12.6" y="0.8" width="0.5" height="10" fill="#8e8e8e"/><rect x="5" y="3.7" width="7.6" height="6.2" fill="#2c2c2c"/><rect x="3.4" y="11" width="9.3" height="0.9" fill="#2c2c2c"/><rect x="3.4" y="11.9" width="9.3" height="1.1" fill="#4b4b4b" opacity="0.35"/><path d="M8.7 4.7h3.4l-0.5 3.4-1.5 0.2z" fill="#f23a3c"/><path d="M7.7 6.3l2.2 3.1H5.4z" fill="#10a238"/><circle cx="5.6" cy="4.9" r="2.05" fill="#118cf4"/></svg>
<span class="t" style="left:156.8px;top:667px;font-size:10.5px;line-height:10.5px;color:#1a1a1a;font-weight:700;letter-spacing:0.111px;">Pre-comp 1</span>
<div style="left:269px;top:665px;width:13px;height:13px;background:#393939;"></div>
<div style="left:284px;top:665px;width:13px;height:13px;background:#393939;"></div>
<div style="left:299px;top:665px;width:13px;height:13px;background:#393939;"></div>
<div style="left:344px;top:665px;width:13px;height:13px;background:#393939;"></div>
<div style="left:359px;top:665px;width:13px;height:13px;background:#393939;"></div>
<div style="left:374px;top:665px;width:13px;height:13px;background:#393939;"></div>
<svg style="left:269.2px;top:666.6px;" width="13" height="10" viewBox="0 0 13 10"><path d="M1.5 6.7C1.5 2.6 3.6 0.2 6.3 0.2S11.1 2.6 11.1 6.7z" fill="#c0c0c0"/><rect x="0" y="6.5" width="12.6" height="1.2" fill="#c0c0c0"/><rect x="5.4" y="3.4" width="1.8" height="6.6" fill="#c0c0c0"/><rect x="3" y="3.3" width="2" height="2.4" rx="0.8" fill="#393939"/><rect x="7.6" y="3.3" width="2" height="2.4" rx="0.8" fill="#393939"/></svg>
<svg style="left:299px;top:665px;" width="13" height="13" viewBox="0 0 13 13"><path d="M1.6 11.4L11.6 1.6" stroke="#a8a8a8" stroke-width="1.5"/></svg>
<div style="left:474px;top:664px;width:5px;height:16px;background:#404040;"></div>
<div style="left:405px;top:665px;width:69px;height:14px;background:#242424;"></div>
<span class="t" style="left:411.5px;top:667px;font-size:11px;line-height:11px;color:#d0d0d0;letter-spacing:0.058px;">Normal</span>
<svg style="left:461.6px;top:669.4px;" width="8" height="5" viewBox="0 0 8 5"><path d="M0.6 0.8L3.8 4l3.2-3.2" stroke="#c8c8c8" stroke-width="1.2" fill="none"/></svg>
<div style="left:479px;top:665px;width:13px;height:13px;background:#393939;"></div>
<svg style="left:572.4px;top:665.6px;" width="13" height="12" viewBox="0 0 13 12"><path d="M11.6 1.1 Q11.8 3.6 11.25 5.9 A5.25 4.55 0 0 1 6 10.45 A4.95 4.55 0 0 1 1.05 5.9 A4.25 4.55 0 0 1 5.3 1.35 A3.1 4.05 0 0 1 8.4 5.4 A2.3 2.55 0 0 1 6.1 7.95 A2.25 2.05 0 0 1 3.85 5.9 A1.75 1.75 0 0 1 5.6 4.15 A1.2 1.2 0 0 1 6.8 5.7" stroke="#b0b0b0" stroke-width="1.1" fill="none" stroke-linecap="round" stroke-linejoin="round"/></svg>
<div style="left:591px;top:665px;width:89px;height:14px;background:#242424;"></div>
<span class="t" style="left:597.7px;top:667px;font-size:11px;line-height:11px;color:#d0d0d0;letter-spacing:-0.124px;">None</span>
<svg style="left:667.4px;top:669.4px;" width="8" height="5" viewBox="0 0 8 5"><path d="M0.6 0.8L3.8 4l3.2-3.2" stroke="#c8c8c8" stroke-width="1.2" fill="none"/></svg>
<div style="left:2px;top:681px;width:698px;height:16px;background:#383838;"></div>
<div style="left:2px;top:697px;width:698px;height:1px;background:#333333;"></div>
<div style="left:6px;top:682px;width:13px;height:13px;background:#272727;"></div>
<div style="left:51px;top:682px;width:13px;height:13px;background:#272727;"></div>
<svg style="left:75.4px;top:685.6px;" width="6" height="9" viewBox="0 0 6 9"><path d="M0.8 0.8l3.6 3.4L0.8 7.6" stroke="#b4b4b4" stroke-width="1.2" fill="none"/></svg>
<div style="left:87px;top:683px;width:12px;height:12px;background:#b5373c;"></div>
<span class="t" style="left:108.8px;top:684px;font-size:10.5px;line-height:10.5px;color:#c8c8c8;">2</span>
<div style="left:137px;top:682px;width:14px;height:14px;background:#111;"></div>
<div style="left:138px;top:683px;width:12px;height:12px;background:#000;"></div>
<span class="t" style="left:156.8px;top:684px;font-size:10.5px;line-height:10.5px;color:#c4c4c4;font-weight:700;letter-spacing:-0.074px;">Black Solid 1</span>
<div style="left:269px;top:682px;width:13px;height:13px;background:#272727;"></div>
<div style="left:284px;top:682px;width:13px;height:13px;background:#272727;"></div>
<div style="left:299px;top:682px;width:13px;height:13px;background:#272727;"></div>
<div style="left:344px;top:682px;width:13px;height:13px;background:#272727;"></div>
<div style="left:359px;top:682px;width:13px;height:13px;background:#272727;"></div>
<div style="left:374px;top:682px;width:13px;height:13px;background:#272727;"></div>
<svg style="left:269.2px;top:683.6px;" width="13" height="10" viewBox="0 0 13 10"><path d="M3.4 7a2.9 2.9 0 0 1 5.8 0z" fill="#b8b8b8"/><rect x="0.2" y="8.4" width="12.4" height="1.1" fill="#b8b8b8"/></svg>
<svg style="left:299px;top:682px;" width="13" height="13" viewBox="0 0 13 13"><path d="M1.6 11.4L11.6 1.6" stroke="#a8a8a8" stroke-width="1.5"/></svg>
<div style="left:405px;top:682px;width:69px;height:14px;background:#242424;"></div>
<span class="t" style="left:411.5px;top:684px;font-size:11px;line-height:11px;color:#d0d0d0;letter-spacing:0.058px;">Normal</span>
<svg style="left:461.6px;top:686.4px;" width="8" height="5" viewBox="0 0 8 5"><path d="M0.6 0.8L3.8 4l3.2-3.2" stroke="#c8c8c8" stroke-width="1.2" fill="none"/></svg>
<div style="left:479px;top:682px;width:13px;height:13px;background:#272727;"></div>
<div style="left:498px;top:682px;width:65px;height:14px;background:#242424;"></div>
<span class="t" style="left:504.5px;top:684px;font-size:11px;line-height:11px;color:#d0d0d0;letter-spacing:-0.174px;">None</span>
<svg style="left:550.6px;top:686.4px;" width="8" height="5" viewBox="0 0 8 5"><path d="M0.6 0.8L3.8 4l3.2-3.2" stroke="#c8c8c8" stroke-width="1.2" fill="none"/></svg>
<svg style="left:572.4px;top:682.6px;" width="13" height="12" viewBox="0 0 13 12"><path d="M11.6 1.1 Q11.8 3.6 11.25 5.9 A5.25 4.55 0 0 1 6 10.45 A4.95 4.55 0 0 1 1.05 5.9 A4.25 4.55 0 0 1 5.3 1.35 A3.1 4.05 0 0 1 8.4 5.4 A2.3 2.55 0 0 1 6.1 7.95 A2.25 2.05 0 0 1 3.85 5.9 A1.75 1.75 0 0 1 5.6 4.15 A1.2 1.2 0 0 1 6.8 5.7" stroke="#b0b0b0" stroke-width="1.1" fill="none" stroke-linecap="round" stroke-linejoin="round"/></svg>
<div style="left:591px;top:682px;width:89px;height:14px;background:#242424;"></div>
<span class="t" style="left:597.7px;top:684px;font-size:11px;line-height:11px;color:#d0d0d0;letter-spacing:-0.124px;">None</span>
<svg style="left:667.4px;top:686.4px;" width="8" height="5" viewBox="0 0 8 5"><path d="M0.6 0.8L3.8 4l3.2-3.2" stroke="#c8c8c8" stroke-width="1.2" fill="none"/></svg>
<div style="left:2px;top:698px;width:698px;height:16px;background:#383838;"></div>
<div style="left:2px;top:714px;width:698px;height:1px;background:#333333;"></div>
<div style="left:6px;top:699px;width:13px;height:13px;background:#272727;"></div>
<div style="left:51px;top:699px;width:13px;height:13px;background:#272727;"></div>
<svg style="left:75.4px;top:702.6px;" width="6" height="9" viewBox="0 0 6 9"><path d="M0.8 0.8l3.6 3.4L0.8 7.6" stroke="#b4b4b4" stroke-width="1.2" fill="none"/></svg>
<div style="left:87px;top:700px;width:12px;height:12px;background:#b5373c;"></div>
<span class="t" style="left:108.8px;top:701px;font-size:10.5px;line-height:10.5px;color:#c8c8c8;">3</span>
<div style="left:137px;top:699px;width:14px;height:14px;background:#111;"></div>
<div style="left:138px;top:700px;width:12px;height:12px;background:#a9a9a9;"></div>
<span class="t" style="left:156.8px;top:701px;font-size:10.5px;line-height:10.5px;color:#c4c4c4;font-weight:700;letter-spacing:-0.048px;">Light Gray Solid 1</span>
<div style="left:269px;top:699px;width:13px;height:13px;background:#272727;"></div>
<div style="left:284px;top:699px;width:13px;height:13px;background:#272727;"></div>
<div style="left:299px;top:699px;width:13px;height:13px;background:#272727;"></div>
<div style="left:344px;top:699px;width:13px;height:13px;background:#272727;"></div>
<div style="left:359px;top:699px;width:13px;height:13px;background:#272727;"></div>
<div style="left:374px;top:699px;width:13px;height:13px;background:#272727;"></div>
<svg style="left:269.2px;top:700.6px;" width="13" height="10" viewBox="0 0 13 10"><path d="M3.4 7a2.9 2.9 0 0 1 5.8 0z" fill="#b8b8b8"/><rect x="0.2" y="8.4" width="12.4" height="1.1" fill="#b8b8b8"/></svg>
<svg style="left:299px;top:699px;" width="13" height="13" viewBox="0 0 13 13"><path d="M1.6 11.4L11.6 1.6" stroke="#a8a8a8" stroke-width="1.5"/></svg>
<div style="left:405px;top:699px;width:69px;height:14px;background:#242424;"></div>
<span class="t" style="left:411.5px;top:701px;font-size:11px;line-height:11px;color:#d0d0d0;letter-spacing:0.058px;">Normal</span>
<svg style="left:461.6px;top:703.4px;" width="8" height="5" viewBox="0 0 8 5"><path d="M0.6 0.8L3.8 4l3.2-3.2" stroke="#c8c8c8" stroke-width="1.2" fill="none"/></svg>
<div style="left:479px;top:699px;width:13px;height:13px;background:#272727;"></div>
<div style="left:498px;top:699px;width:65px;height:14px;background:#242424;"></div>
<span class="t" style="left:504.5px;top:701px;font-size:11px;line-height:11px;color:#d0d0d0;letter-spacing:-0.174px;">None</span>
<svg style="left:550.6px;top:703.4px;" width="8" height="5" viewBox="0 0 8 5"><path d="M0.6 0.8L3.8 4l3.2-3.2" stroke="#c8c8c8" stroke-width="1.2" fill="none"/></svg>
<svg style="left:572.4px;top:699.6px;" width="13" height="12" viewBox="0 0 13 12"><path d="M11.6 1.1 Q11.8 3.6 11.25 5.9 A5.25 4.55 0 0 1 6 10.45 A4.95 4.55 0 0 1 1.05 5.9 A4.25 4.55 0 0 1 5.3 1.35 A3.1 4.05 0 0 1 8.4 5.4 A2.3 2.55 0 0 1 6.1 7.95 A2.25 2.05 0 0 1 3.85 5.9 A1.75 1.75 0 0 1 5.6 4.15 A1.2 1.2 0 0 1 6.8 5.7" stroke="#b0b0b0" stroke-width="1.1" fill="none" stroke-linecap="round" stroke-linejoin="round"/></svg>
<div style="left:591px;top:699px;width:89px;height:14px;background:#242424;"></div>
<span class="t" style="left:597.7px;top:701px;font-size:11px;line-height:11px;color:#d0d0d0;letter-spacing:-0.124px;">None</span>
<svg style="left:667.4px;top:703.4px;" width="8" height="5" viewBox="0 0 8 5"><path d="M0.6 0.8L3.8 4l3.2-3.2" stroke="#c8c8c8" stroke-width="1.2" fill="none"/></svg>
<div style="left:2px;top:715px;width:698px;height:16px;background:#383838;"></div>
<div style="left:2px;top:731px;width:698px;height:1px;background:#303030;"></div>
<div style="left:6px;top:716px;width:13px;height:13px;background:#272727;"></div>
<div style="left:51px;top:716px;width:13px;height:13px;background:#272727;"></div>
<svg style="left:75.4px;top:719.6px;" width="6" height="9" viewBox="0 0 6 9"><path d="M0.8 0.8l3.6 3.4L0.8 7.6" stroke="#b4b4b4" stroke-width="1.2" fill="none"/></svg>
<div style="left:87px;top:717px;width:12px;height:12px;background:#b5373c;"></div>
<span class="t" style="left:108.8px;top:718px;font-size:10.5px;line-height:10.5px;color:#c8c8c8;">4</span>
<div style="left:137px;top:716px;width:14px;height:14px;background:#111;"></div>
<div style="left:138px;top:717px;width:12px;height:12px;background:#dcdcdc;"></div>
<span class="t" style="left:156.8px;top:718px;font-size:10.5px;line-height:10.5px;color:#c4c4c4;font-weight:700;letter-spacing:-0.163px;">Solid 1</span>
<div style="left:269px;top:716px;width:13px;height:13px;background:#272727;"></div>
<div style="left:284px;top:716px;width:13px;height:13px;background:#272727;"></div>
<div style="left:299px;top:716px;width:13px;height:13px;background:#272727;"></div>
<div style="left:344px;top:716px;width:13px;height:13px;background:#272727;"></div>
<div style="left:359px;top:716px;width:13px;height:13px;background:#272727;"></div>
<div style="left:374px;top:716px;width:13px;height:13px;background:#272727;"></div>
<svg style="left:269.2px;top:717.6px;" width="13" height="10" viewBox="0 0 13 10"><path d="M3.4 7a2.9 2.9 0 0 1 5.8 0z" fill="#b8b8b8"/><rect x="0.2" y="8.4" width="12.4" height="1.1" fill="#b8b8b8"/></svg>
<svg style="left:299px;top:716px;" width="13" height="13" viewBox="0 0 13 13"><path d="M1.6 11.4L11.6 1.6" stroke="#a8a8a8" stroke-width="1.5"/></svg>
<div style="left:405px;top:716px;width:69px;height:14px;background:#242424;"></div>
<span class="t" style="left:411.5px;top:718px;font-size:11px;line-height:11px;color:#d0d0d0;letter-spacing:0.058px;">Normal</span>
<svg style="left:461.6px;top:720.4px;" width="8" height="5" viewBox="0 0 8 5"><path d="M0.6 0.8L3.8 4l3.2-3.2" stroke="#c8c8c8" stroke-width="1.2" fill="none"/></svg>
<div style="left:479px;top:716px;width:13px;height:13px;background:#272727;"></div>
<div style="left:498px;top:716px;width:65px;height:14px;background:#242424;"></div>
<span class="t" style="left:504.5px;top:718px;font-size:11px;line-height:11px;color:#d0d0d0;letter-spacing:-0.174px;">None</span>
<svg style="left:550.6px;top:720.4px;" width="8" height="5" viewBox="0 0 8 5"><path d="M0.6 0.8L3.8 4l3.2-3.2" stroke="#c8c8c8" stroke-width="1.2" fill="none"/></svg>
<svg style="left:572.4px;top:716.6px;" width="13" height="12" viewBox="0 0 13 12"><path d="M11.6 1.1 Q11.8 3.6 11.25 5.9 A5.25 4.55 0 0 1 6 10.45 A4.95 4.55 0 0 1 1.05 5.9 A4.25 4.55 0 0 1 5.3 1.35 A3.1 4.05 0 0 1 8.4 5.4 A2.3 2.55 0 0 1 6.1 7.95 A2.25 2.05 0 0 1 3.85 5.9 A1.75 1.75 0 0 1 5.6 4.15 A1.2 1.2 0 0 1 6.8 5.7" stroke="#b0b0b0" stroke-width="1.1" fill="none" stroke-linecap="round" stroke-linejoin="round"/></svg>
<div style="left:591px;top:716px;width:89px;height:14px;background:#242424;"></div>
<span class="t" style="left:597.7px;top:718px;font-size:11px;line-height:11px;color:#d0d0d0;letter-spacing:-0.124px;">None</span>
<svg style="left:667.4px;top:720.4px;" width="8" height="5" viewBox="0 0 8 5"><path d="M0.6 0.8L3.8 4l3.2-3.2" stroke="#c8c8c8" stroke-width="1.2" fill="none"/></svg>
<div style="left:2px;top:732px;width:698px;height:2px;background:#2f2f2f;"></div>
<div style="left:128px;top:660px;width:136px;height:17px;border:3px solid #f7a12c;border-radius:0.5px;"></div>
<div style="left:700px;top:613px;width:1px;height:388px;background:#161616;"></div>
<div style="left:700px;top:613px;width:82px;height:1px;background:#1a1a1a;"></div>
<div style="left:700px;top:624px;width:82px;height:1px;background:#1a1a1a;"></div>
<div style="left:708px;top:614px;width:74px;height:10px;background:#6c6c6c;"></div>
<div style="left:701.8px;top:614.4px;width:6.2px;height:9.2px;background:#1088e6;border-radius:4.5px 0 0 4.5px;"></div>
<div style="left:701px;top:622px;width:40px;height:18px;overflow:hidden;"><span class="t" style="left:-4.3px;top:4px;font-size:10.7px;line-height:11px;color:#b4b4b4;">0:00s</span></div>
<div style="left:708px;top:633px;width:1px;height:11px;background:#a8a8a8;"></div>
<div style="left:701px;top:643px;width:81px;height:1px;background:#161616;"></div>
<div style="left:708px;top:644px;width:74px;height:15px;background:#5e5e5e;"></div>
<div style="left:701.8px;top:644.4px;width:5.8px;height:14.4px;background:#1088e6;border-radius:4px 0 0 4px;"></div>
<div style="left:701px;top:659px;width:81px;height:1px;background:#161616;"></div>
<div style="left:701px;top:660px;width:7px;height:3px;background:#3a3a3a;"></div>
<div style="left:708px;top:660px;width:74px;height:3px;background:#12c030;"></div>
<div style="left:701px;top:663px;width:81px;height:1px;background:#161616;"></div>
<div style="left:701px;top:664px;width:7px;height:337px;background:#2b2b2b;"></div>
<div style="left:708px;top:664px;width:74px;height:337px;background:#3a3a3a;"></div>
<div style="left:701px;top:664px;width:7px;height:16px;background:#4b4b4b;"></div>
<div style="left:701px;top:681px;width:7px;height:16px;background:#3a3a3a;"></div>
<div style="left:701px;top:698px;width:7px;height:16px;background:#3a3a3a;"></div>
<div style="left:701px;top:715px;width:7px;height:16px;background:#3a3a3a;"></div>
<div style="left:701px;top:680px;width:81px;height:1px;background:#262626;"></div>
<div style="left:701px;top:697px;width:81px;height:1px;background:#262626;"></div>
<div style="left:701px;top:714px;width:81px;height:1px;background:#262626;"></div>
<div style="left:701px;top:731px;width:81px;height:1px;background:#262626;"></div>
<div style="left:708px;top:664px;width:74px;height:16px;background:#a08e74;box-shadow:inset 1px 0 0 #d4c8b4, inset 0 1px 0 #c0b198, inset 0 -1px 0 #887860;"></div>
<svg style="left:708.8px;top:664.8px;" width="5" height="5" viewBox="0 0 5 5"><path d="M0 0h5C2 0.2 0.2 2 0 5z" fill="#000"/></svg>
<div style="left:708px;top:681px;width:74px;height:16px;background:#7d3538;box-shadow:inset 0 1px 0 #8a4044, inset 0 -1px 0 #6a2c2f;"></div>
<div style="left:708px;top:698px;width:74px;height:16px;background:#7d3538;box-shadow:inset 0 1px 0 #8a4044, inset 0 -1px 0 #6a2c2f;"></div>
<div style="left:708px;top:715px;width:74px;height:16px;background:#7d3538;box-shadow:inset 0 1px 0 #8a4044, inset 0 -1px 0 #6a2c2f;"></div>
<div style="left:2px;top:1000px;width:780px;height:1px;background:#161616;"></div>
<div style="left:2px;top:1001px;width:780px;height:16px;background:#2b2b2b;"></div>
<div style="left:5.5px;top:1001.5px;width:16px;height:15px;background:#272727;border:1px solid #343434;box-sizing:border-box;"></div>
<div style="left:23.5px;top:1001.5px;width:17px;height:15px;background:#272727;border:1px solid #343434;box-sizing:border-box;"></div>
<svg style="left:8px;top:1003.8px;" width="11" height="11" viewBox="0 0 11 11"><rect x="0.6" y="0.6" width="5.6" height="5.6" fill="none" stroke="#2492e8" stroke-width="1.1"/><rect x="2.4" y="2.4" width="5.6" height="5.6" fill="#272727" stroke="#2492e8" stroke-width="1.1"/><rect x="4.4" y="4.4" width="6" height="6" fill="#272727" stroke="#2492e8" stroke-width="1.1"/><path d="M7.4 6v2.8M6 7.4h2.8" stroke="#2492e8" stroke-width="1"/></svg>
<svg style="left:26px;top:1002.8px;" width="12" height="12" viewBox="0 0 12 12"><circle cx="4.6" cy="4.6" r="3.8" fill="none" stroke="#2492e8" stroke-width="1.1"/><rect x="5" y="5" width="6" height="6" fill="#272727" stroke="#2492e8" stroke-width="1.1"/><path d="M5 5h3.4A3.8 3.8 0 0 1 5 8.4z" fill="#2492e8"/></svg>
<svg style="left:43.6px;top:1002.8px;" width="12" height="12" viewBox="0 0 12 12"><defs><linearGradient id="bg1" x1="0" y1="0" x2="1" y2="0"><stop offset="0" stop-color="#d0d0d0"/><stop offset="0.5" stop-color="#7c7c7c"/><stop offset="1" stop-color="#d0d0d0"/></linearGradient></defs><path d="M3.4 0.4h5v3.4l3.2 2.2-3.2 2.2v3.4h-5V8.2L0.2 6l3.2-2.2z" fill="url(#bg1)"/></svg>
<svg style="left:706px;top:1005px;" width="11" height="6" viewBox="0 0 11 6"><path d="M0 5.4l3-3.2 1.6 1.6L7 0.6l3.6 4.8z" fill="#b8b8b8"/></svg>
<div style="left:737px;top:1008px;width:38px;height:2px;background:#474747;"></div>
<div style="left:727px;top:1005px;width:10px;height:10px;border:2px solid #9c9c9c;border-radius:50%;box-sizing:border-box;background:#333;"></div>
</div></body></html>
